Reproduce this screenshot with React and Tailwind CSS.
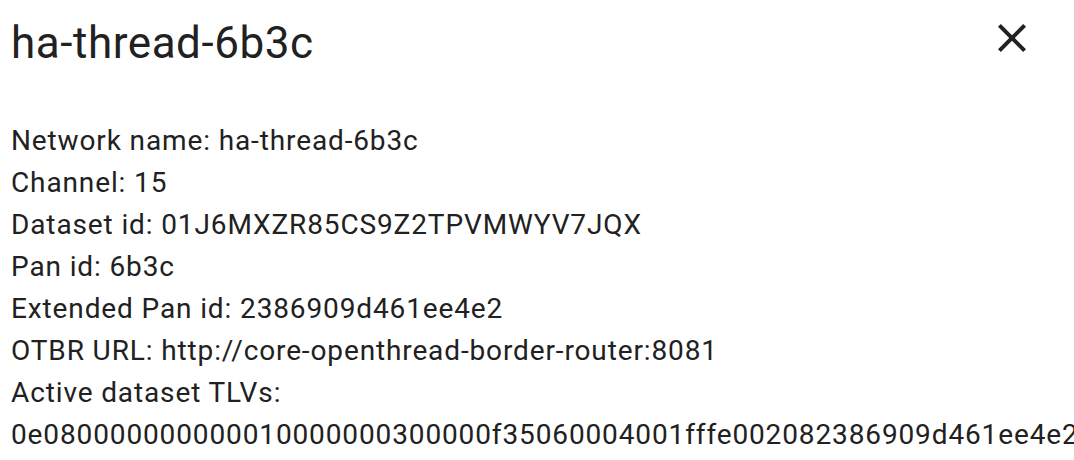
import React from 'react';

const info = [
    ['Network name', 'ha-thread-6b3c'],
    ['Channel', '15'],
    ['Dataset id', '01J6MXZR85CS9Z2TPVMWYV7JQX'],
    ['Pan id', '6b3c'],
    ['Extended Pan id', '2386909d461ee4e2'],
    ['OTBR URL', 'http://core-openthread-border-router:8081'],
];

const tlvs = '0e080000000000010000000300000f35060004001fffe002082386909d461ee4e20708fdb3c1e2a5f6d9e3';

function CloseIcon() {
    return (
        <svg width="48" height="48" viewBox="0 0 24 24" className="text-[#212121]">
            <path
                fill="currentColor"
                d="M19,6.41L17.59,5L12,10.59L6.41,5L5,6.41L10.59,12L5,17.59L6.41,19L12,13.41L17.59,19L19,17.59L13.41,12L19,6.41Z"
            />
        </svg>
    );
}

export default function App() {
    return (
        <div className="w-[1074px] h-[460px] bg-white overflow-hidden text-[#212121] font-['Roboto',sans-serif]">
            <div className="flex items-start justify-between pl-[11px] pr-[38px] pt-[19px]">
                <h2 className="text-[44px] leading-[48px] font-normal tracking-[0.0125em] whitespace-nowrap">ha-thread-6b3c</h2>
                <button className="-mt-[5px]">
                    <CloseIcon />
                </button>
            </div>
            <div className="pl-[11px] pt-[53px] text-[28px] leading-[42px] tracking-[0.03125em]">
                {info.map(([label, value]) => (
                    <div key={label} className="whitespace-nowrap">
                        {label}: {value}
                    </div>
                ))}
                <div className="whitespace-nowrap">Active dataset TLVs:</div>
                <div className="whitespace-nowrap">{tlvs}</div>
            </div>
        </div>
    );
}
